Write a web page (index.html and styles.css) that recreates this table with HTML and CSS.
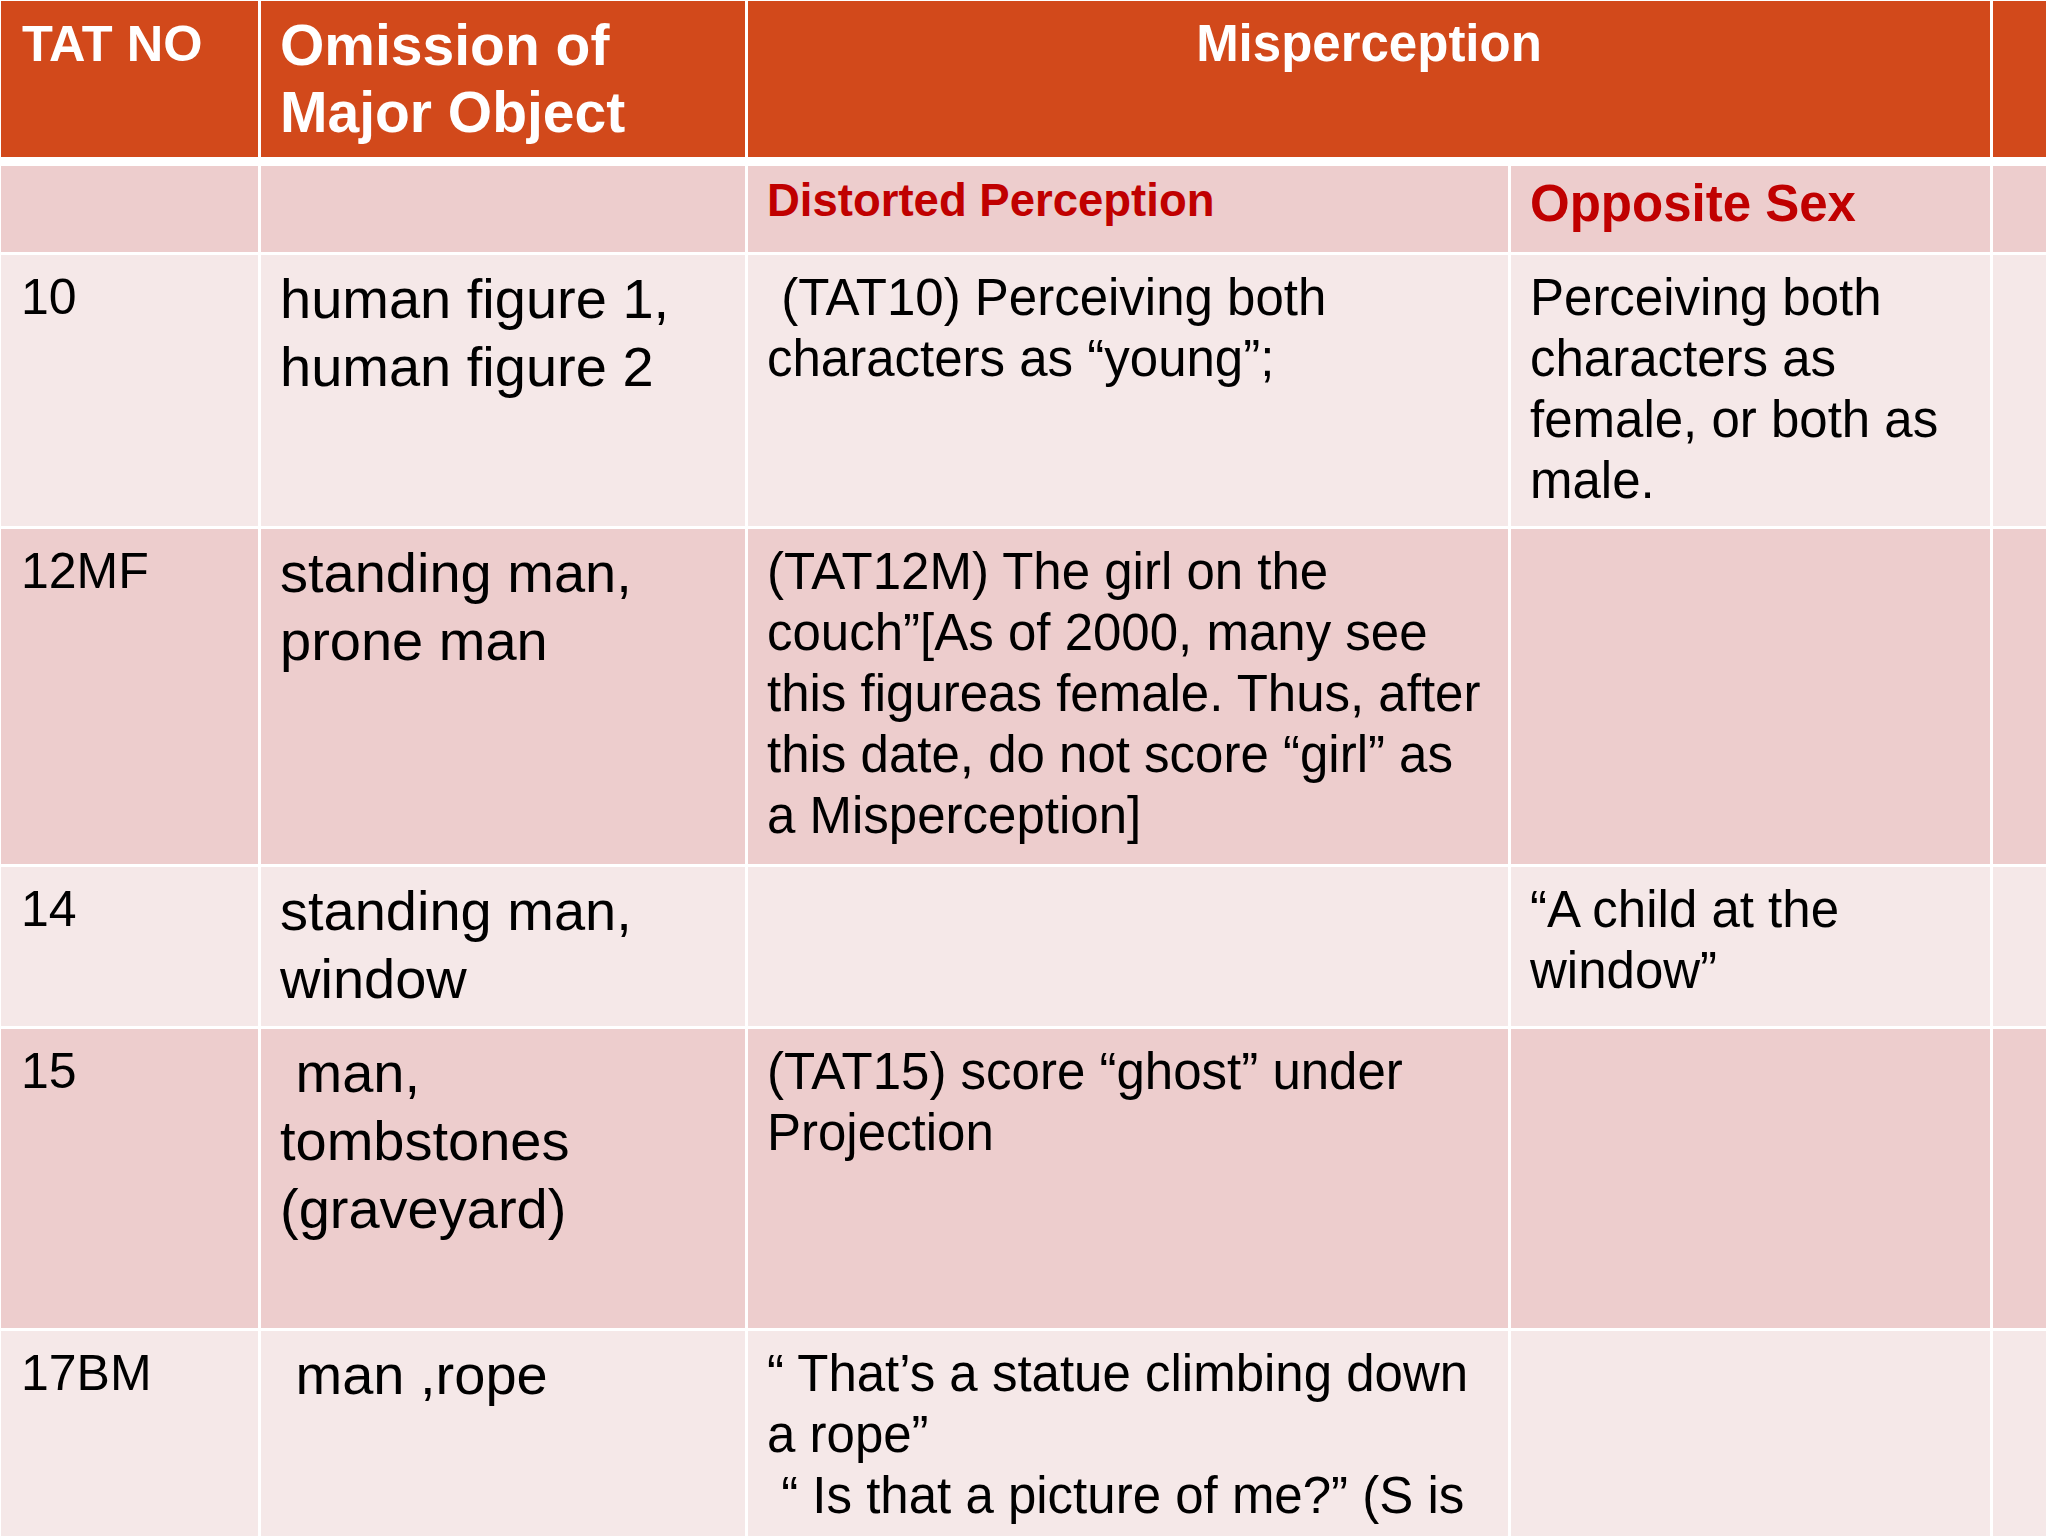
FILE: index.html
```html
<!DOCTYPE html>
<html lang="en">
<head>
<meta charset="utf-8">
<title>TAT Misperception</title>
<link rel="stylesheet" href="styles.css">
</head>
<body>
<div class="sheet">
  <div class="cell hd hd-tat">TAT NO</div>
  <div class="cell hd hd-obj">Omission of<br>Major Object</div>
  <div class="cell hd hd-mis">Misperception</div>
  <div class="cell hd"></div>

  <div class="cell sub"></div>
  <div class="cell sub"></div>
  <div class="cell sub sub-dist">Distorted Perception</div>
  <div class="cell sub sub-opp">Opposite Sex</div>
  <div class="cell sub"></div>

  <div class="cell light num">10</div>
  <div class="cell light obj">human figure 1,<br>human figure 2</div>
  <div class="cell light txt">&nbsp;(TAT10) Perceiving both<br>characters as “young”;</div>
  <div class="cell light txt">Perceiving both<br>characters as<br>female, or both as<br>male.</div>
  <div class="cell light"></div>

  <div class="cell pink num">12MF</div>
  <div class="cell pink obj">standing man,<br>prone man</div>
  <div class="cell pink txt">(TAT12M) The girl on the<br>couch”[As of 2000, many see<br>this figureas female. Thus, after<br>this date, do not score “girl” as<br>a Misperception]</div>
  <div class="cell pink txt"></div>
  <div class="cell pink"></div>

  <div class="cell light num">14</div>
  <div class="cell light obj">standing man,<br>window</div>
  <div class="cell light txt"></div>
  <div class="cell light txt">“A child at the<br>window”</div>
  <div class="cell light"></div>

  <div class="cell pink num">15</div>
  <div class="cell pink obj">&nbsp;man,<br>tombstones<br>(graveyard)</div>
  <div class="cell pink txt">(TAT15) score “ghost” under<br>Projection</div>
  <div class="cell pink txt"></div>
  <div class="cell pink"></div>

  <div class="cell light num">17BM</div>
  <div class="cell light obj">&nbsp;man ,rope</div>
  <div class="cell light txt">“ That’s a statue climbing down<br>a rope”<br>&nbsp;“ Is that a picture of me?” (S is</div>
  <div class="cell light txt"></div>
  <div class="cell light"></div>
</div>
</body>
</html>
```

FILE: styles.css
```css
html, body {
  margin: 0;
  padding: 0;
  width: 2048px;
  height: 1536px;
  overflow: hidden;
  background: #ffffff;
}

.sheet {
  display: grid;
  grid-template-columns: 257px 484px 760px 479px 1fr;
  grid-template-rows: 162px 86px 271px 335px 159px 299px 300px;
  column-gap: 3px;
  row-gap: 3px;
  padding: 1px 2px 0 1px;
  width: 2048px;
  box-sizing: border-box;
  background: #ffffff;
  font-family: "Liberation Sans", Arial, sans-serif;
  color: #000000;
}

.cell {
  padding: 12px 8px 0 19px;
  line-height: 1.2;
  white-space: nowrap;
  overflow: hidden;
}

.hd {
  background: #d2491b;
  color: #ffffff;
  font-weight: bold;
  margin-bottom: 6px;
  padding-top: 13px;
}

.hd-tat {
  font-size: 50.5px;
  padding-left: 21px;
}

.hd-obj {
  font-size: 57px;
  line-height: 67px;
  padding-top: 11px;
}

.hd-mis {
  grid-column: span 2;
  font-size: 51px;
  text-align: center;
  padding: 12px 0 0 0;
}

.sub {
  background: #edcdcd;
  color: #c00000;
  font-weight: bold;
  padding-top: 8px;
}

.sub-dist {
  font-size: 45.5px;
}

.sub-opp {
  font-size: 51px;
  padding-top: 7px;
}

.light {
  background: #f5e8e8;
}

.pink {
  background: #edcdcd;
}

.num {
  font-size: 50px;
  padding-left: 20px;
}

.obj {
  font-size: 56px;
  line-height: 68px;
  padding-top: 10px;
}

.txt {
  font-size: 51px;
  line-height: 61px;
}
```
